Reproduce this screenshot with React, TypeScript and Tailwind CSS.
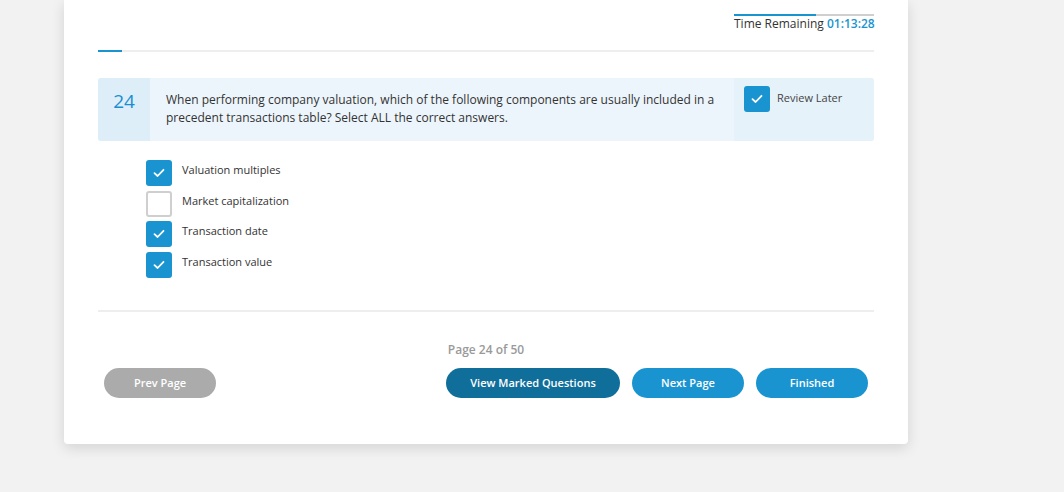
import React from "react";

const Check = () => (
  <svg width="12" height="10" viewBox="0 0 12 10" fill="none">
    <path d="M1.5 5.2 L4.6 8 L10.5 1.8" stroke="white" strokeWidth="1.8" strokeLinecap="round" strokeLinejoin="round" />
  </svg>
);

const Box = ({ checked }: { checked: boolean }) =>
  checked ? (
    <div className="w-[26px] h-[26px] rounded-[3px] bg-[#1a94d0] flex items-center justify-center shrink-0">
      <Check />
    </div>
  ) : (
    <div className="w-[26px] h-[26px] rounded-[3px] border-2 border-[#cfcfcf] bg-white shrink-0" />
  );

const options = [
  { label: "Valuation multiples", checked: true },
  { label: "Market capitalization", checked: false },
  { label: "Transaction date", checked: true },
  { label: "Transaction value", checked: true },
];

export default function App() {
  return (
    <div
      className="w-[1064px] h-[492px] bg-[#f2f2f2] pl-[64px] overflow-hidden"
      style={{ fontFamily: '"Open Sans", "Noto Sans", sans-serif' }}
    >
      <div className="w-[844px] bg-white rounded-b-[4px] shadow-[0_4px_14px_rgba(0,0,0,0.13)] px-[34px] pt-[14px] pb-[46px] text-[#333]">
        <div className="flex justify-end">
          <div className="w-[140px]">
            <div className="h-[2px] bg-[#cfcfcf] flex">
              <div className="w-[82px] h-[2px] bg-[#1a94d0]" />
            </div>
            <div className="text-[12px] leading-[14px] mt-[1px] whitespace-nowrap text-right">
              <span className="text-[#333]">Time Remaining </span>
              <span className="text-[#1a94d0] font-semibold">01:13:28</span>
            </div>
          </div>
        </div>
        <div className="mt-[19px] h-[2px] bg-[#eeeeee]">
          <div className="w-[24px] h-[2px] bg-[#1a94d0]" />
        </div>

        <div className="mt-[26px] h-[63px] flex rounded-[3px] overflow-hidden bg-[#edf5fc]">
          <div className="w-[52px] bg-[#ddeef9] flex justify-center pt-[10px]">
            <span className="text-[19px] leading-[26px] text-[#1a8fd0]">24</span>
          </div>
          <div className="flex-1 pl-[16px] pr-[16px] pt-[13px] text-[12px] leading-[18px] text-[#333]">
            When performing company valuation, which of the following components are usually included in a precedent transactions table? Select ALL the correct answers.
          </div>
          <div className="w-[140px] bg-[#e6f2fa] pl-[10px] pt-[8px] flex items-start gap-[7px]">
            <Box checked />
            <span className="text-[11px] leading-[24px] text-[#444]">Review Later</span>
          </div>
        </div>

        <div className="mt-[19px] pl-[48px] flex flex-col gap-[4.7px]">
          {options.map((o) => (
            <div key={o.label} className="flex items-start gap-[10px]">
              <Box checked={o.checked} />
              <span className="text-[11px] leading-[20px] text-[#333]">{o.label}</span>
            </div>
          ))}
        </div>

        <div className="mt-[32px] h-[2px] bg-[#eeeeee]" />

        <div className="mt-[30px] text-center text-[12px] leading-[16px] text-[#9a9a9a] font-semibold">
          Page 24 of 50
        </div>

        <div className="mt-[10px] px-[6px] flex justify-between">
          <button className="w-[112px] h-[30px] rounded-full bg-[#ababab] text-white text-[11px] font-semibold">
            Prev Page
          </button>
          <div className="flex gap-[12px]">
            <button className="w-[174px] h-[30px] rounded-full bg-[#106e9a] text-white text-[11px] font-semibold">
              View Marked Questions
            </button>
            <button className="w-[112px] h-[30px] rounded-full bg-[#1a94d0] text-white text-[11px] font-semibold">
              Next Page
            </button>
            <button className="w-[112px] h-[30px] rounded-full bg-[#1a94d0] text-white text-[11px] font-semibold">
              Finished
            </button>
          </div>
        </div>
      </div>
    </div>
  );
}
